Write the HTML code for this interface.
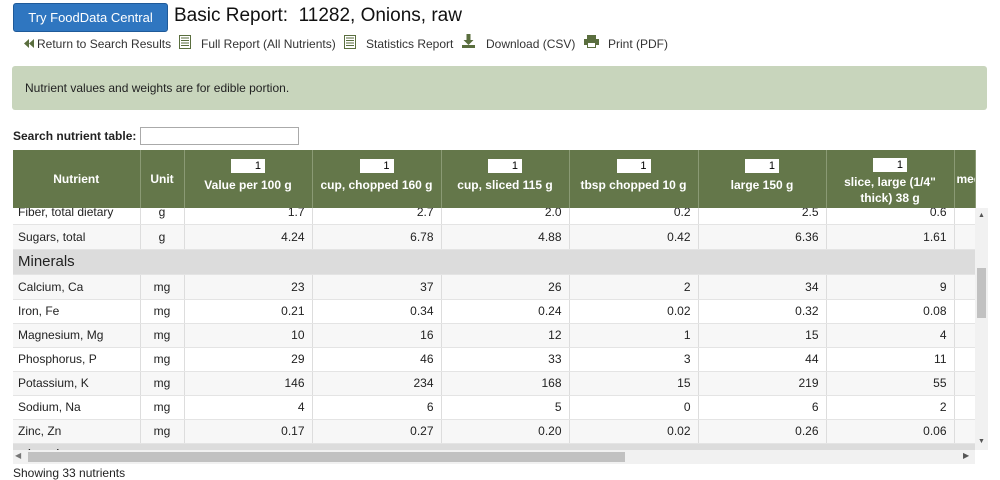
<!DOCTYPE html>
<html><head><meta charset="utf-8"><style>
*{box-sizing:border-box;margin:0;padding:0}
body{width:1000px;height:474px;overflow:hidden;background:#fff;font-family:"Liberation Sans",Arial,sans-serif;font-size:12px;color:#222;position:relative}
.btn{position:absolute;left:13px;top:3px;width:155px;height:29px;background:#2f76c0;border:1px solid #1f5a99;border-radius:3px;color:#fff;font-size:13px;text-align:center;line-height:27px}
h1{position:absolute;left:174px;top:5px;font-size:19px;font-weight:normal;color:#111}
.links{position:absolute;top:37px;left:0;font-size:12px;color:#333;white-space:nowrap}
.links span{position:absolute;top:0}
.links svg{position:absolute}
.alert{position:absolute;left:12px;top:66px;width:975px;height:44px;background:#c8d5bc;border-radius:3px;padding:15px 13px;font-size:12px}
.search{position:absolute;left:13px;top:129px;font-weight:bold;font-size:12px}
.sbox{position:absolute;left:140px;top:127px;width:159px;height:18px;border:1px solid #aaa}
table{border-collapse:collapse;table-layout:fixed;position:absolute;left:13px}
td,th{overflow:hidden;white-space:nowrap}
.hd{top:150px;height:58px;background:#64774a;color:#fff}
.hd th{height:58px;font-size:12px;border-right:1px solid #8a9a74;text-align:center;vertical-align:top;font-weight:bold;padding:8px 3px 0}
.hd th.m{vertical-align:middle;padding:0 3px}
.inp{display:inline-block;width:34px;height:14px;background:#fff;color:#000;font-weight:normal;text-align:right;padding-right:4px;font-size:11px;line-height:14px;margin-bottom:5px}
.clip{position:absolute;left:0;top:208px;width:975px;height:242px;overflow:hidden}
.bd{top:-8px}
.bd td{height:24px;border-right:1px solid #ddd;border-bottom:1px solid #e4e4e4;text-align:right;padding-right:7px;font-size:12px}
.bd td:first-child{text-align:left;padding-left:5px}
.bd td:nth-child(2){text-align:center;padding:0}
.bd tr:nth-child(odd) td{background:#fff}
.bd tr:nth-child(even) td{background:#f7f7f7}
.bd tr.t25 td{height:25px}
.bd tr.sec td{background:#dcdcdc;font-size:15px;padding-left:5px;border-right:none;height:25px}
.vs{position:absolute;left:975px;top:208px;width:13px;height:242px;background:#f1f1f1}
.hs{position:absolute;left:13px;top:450px;width:962px;height:14px;background:#f1f1f1}
</style></head><body>
<div class="btn">Try FoodData Central</div>
<h1>Basic Report:&nbsp; 11282, Onions, raw</h1>
<div class="links">
<svg style="left:24px;top:2px" width="11" height="9" viewBox="0 0 11 9"><path d="M5 0L0 4.5L5 9ZM10 0L5 4.5L10 9Z" fill="#5a6e3e"/></svg>
<span style="left:37px">Return to Search Results</span>
<svg style="left:179px;top:-2px" width="12" height="14" viewBox="0 0 12 14"><rect x="0.5" y="0.5" width="11" height="13" fill="#fff" stroke="#5a6e3e"/><path d="M2 3h8M2 5.5h8M2 8h8M2 10.5h8" stroke="#5a6e3e"/></svg>
<span style="left:201px">Full Report (All Nutrients)</span>
<svg style="left:344px;top:-2px" width="12" height="14" viewBox="0 0 12 14"><rect x="0.5" y="0.5" width="11" height="13" fill="#fff" stroke="#5a6e3e"/><path d="M2 3h8M2 5.5h8M2 8h8M2 10.5h8" stroke="#5a6e3e"/></svg>
<span style="left:366px">Statistics Report</span>
<svg style="left:462px;top:-3px" width="13" height="14" viewBox="0 0 13 14"><path d="M4.5 0h4v6h3L6.5 11L1.5 6h3Z M0 11h13v3H0Z" fill="#5a6e3e"/></svg>
<span style="left:486px">Download (CSV)</span>
<svg style="left:584px;top:-2px" width="15" height="13" viewBox="0 0 15 13"><path d="M3 0h9v4H3Z M0 4h15v6h-3v3H3v-3H0Z" fill="#5a6e3e"/><rect x="4" y="8" width="7" height="4" fill="#fff"/></svg>
<span style="left:608px">Print (PDF)</span>
</div>
<div class="alert">Nutrient values and weights are for edible portion.</div>
<div class="search">Search nutrient table:</div>
<div class="sbox"></div>
<table class="hd" style="width:962px">
<colgroup><col style="width:127px"><col style="width:44px"><col style="width:128px"><col style="width:129px"><col style="width:128px"><col style="width:129px"><col style="width:128px"><col style="width:128px"><col style="width:21px"></colgroup>
<tr><th class="m">Nutrient</th><th class="m">Unit</th><th><span class="inp">1</span><br>Value per 100 g</th><th><span class="inp">1</span><br>cup, chopped 160 g</th><th><span class="inp">1</span><br>cup, sliced 115 g</th><th><span class="inp">1</span><br>tbsp chopped 10 g</th><th><span class="inp">1</span><br>large 150 g</th><th style="line-height:16px;padding-top:6px"><span class="inp" style="margin-bottom:2px">1</span><br>slice, large (1/4"<br>thick) 38 g</th><th class="m" style="text-align:left;padding:0 2px">med</th></tr>
</table>
<div class="clip">
<table class="bd" style="width:962px">
<colgroup><col style="width:127px"><col style="width:44px"><col style="width:128px"><col style="width:129px"><col style="width:128px"><col style="width:129px"><col style="width:128px"><col style="width:128px"><col style="width:21px"></colgroup>
<tr><td>Fiber, total dietary</td><td>g</td><td>1.7</td><td>2.7</td><td>2.0</td><td>0.2</td><td>2.5</td><td>0.6</td><td></td></tr>
<tr class="t25"><td>Sugars, total</td><td>g</td><td>4.24</td><td>6.78</td><td>4.88</td><td>0.42</td><td>6.36</td><td>1.61</td><td></td></tr>
<tr class="sec"><td colspan="9">Minerals</td></tr>
<tr class="t25"><td>Calcium, Ca</td><td>mg</td><td>23</td><td>37</td><td>26</td><td>2</td><td>34</td><td>9</td><td></td></tr>
<tr><td>Iron, Fe</td><td>mg</td><td>0.21</td><td>0.34</td><td>0.24</td><td>0.02</td><td>0.32</td><td>0.08</td><td></td></tr>
<tr><td>Magnesium, Mg</td><td>mg</td><td>10</td><td>16</td><td>12</td><td>1</td><td>15</td><td>4</td><td></td></tr>
<tr><td>Phosphorus, P</td><td>mg</td><td>29</td><td>46</td><td>33</td><td>3</td><td>44</td><td>11</td><td></td></tr>
<tr><td>Potassium, K</td><td>mg</td><td>146</td><td>234</td><td>168</td><td>15</td><td>219</td><td>55</td><td></td></tr>
<tr><td>Sodium, Na</td><td>mg</td><td>4</td><td>6</td><td>5</td><td>0</td><td>6</td><td>2</td><td></td></tr>
<tr><td>Zinc, Zn</td><td>mg</td><td>0.17</td><td>0.27</td><td>0.20</td><td>0.02</td><td>0.26</td><td>0.06</td><td></td></tr>
<tr class="sec"><td colspan="9">Vitamins</td></tr>
</table>
</div>
<div class="vs"><div style="position:absolute;left:2px;top:60px;width:9px;height:50px;background:#c1c1c1"></div><div style="position:absolute;left:3px;top:4px;font-size:7px;color:#555">&#9650;</div><div style="position:absolute;left:3px;top:230px;font-size:7px;color:#555">&#9660;</div></div>
<div class="hs"><div style="position:absolute;left:15px;top:2px;width:597px;height:10px;background:#c1c1c1"></div><div style="position:absolute;left:2px;top:1px;font-size:8px;color:#777">&#9664;</div><div style="position:absolute;left:950px;top:1px;font-size:8px;color:#555">&#9654;</div></div>
<div style="position:absolute;left:13px;top:466px;font-size:12px">Showing 33 nutrients</div>
</body></html>
